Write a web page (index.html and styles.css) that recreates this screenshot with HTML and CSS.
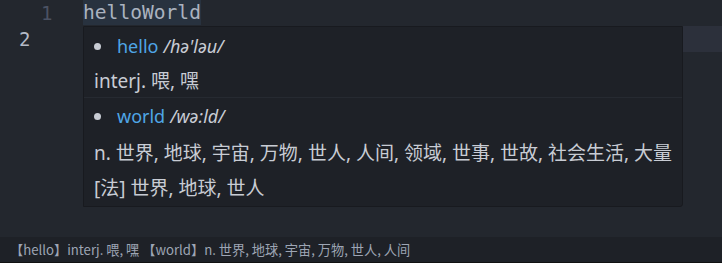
FILE: index.html
```html
<!DOCTYPE html>
<html lang="zh-CN">
<head>
<meta charset="utf-8">
<title>helloWorld</title>
<link rel="stylesheet" href="styles.css">
</head>
<body>
<div class="app">
  <div class="editor">
    <div class="line">
      <div class="gutter"><span class="num num-1">1</span></div>
      <div class="code"><span class="sel">helloWorld</span></div>
    </div>
    <div class="line line-current">
      <div class="gutter"><span class="num num-2">2</span></div>
      <div class="code"></div>
    </div>
    <div class="popup">
      <div class="row head r1"><span class="dot"></span><span class="word">hello</span> <span class="phon">/hə'ləu/</span></div>
      <div class="row def r2">interj. 喂, 嘿</div>
      <div class="row head sep r3"><span class="dot"></span><span class="word">world</span> <span class="phon">/wə:ld/</span></div>
      <div class="row def r4">n. 世界, 地球, 宇宙, 万物, 世人, 人间, 领域, 世事, 世故, 社会生活, 大量</div>
      <div class="row def r5">[法] 世界, 地球, 世人</div>
    </div>
  </div>
  <div class="status">【hello】interj. 喂, 嘿 【world】n. 世界, 地球, 宇宙, 万物, 世人, 人间</div>
</div>
</body>
</html>
```
FILE: styles.css
```css
html, body {
  margin: 0;
  padding: 0;
  background: #23272e;
}
.app {
  width: 722px;
  height: 263px;
  display: flex;
  flex-direction: column;
  overflow: hidden;
}
.editor {
  position: relative;
  flex: 1;
  background: #23272e;
}
.line {
  display: flex;
  height: 26px;
}
.gutter {
  width: 83px;
  flex: none;
  display: flex;
  font-family: "DejaVu Sans Mono", monospace;
  font-size: 19px;
  line-height: 26px;
}
.num-1 {
  margin-left: 41px;
  color: #4b5263;
}
.num-2 {
  margin-left: 19px;
  color: #b4bac6;
}
.code {
  flex: 1;
  font-family: "DejaVu Sans Mono", monospace;
  font-size: 19.6px;
  line-height: 25px;
  color: #abb2bf;
}
.sel {
  display: inline-block;
  background: #28323f;
  height: 25px;
}
.line-current .code {
  background: #2c303b;
}
.popup {
  position: absolute;
  left: 83px;
  top: 26px;
  width: 598px;
  height: 177px;
  background: #1e2127;
  border: 1px solid #181a1f;
  border-radius: 0 0 3px 0;
  font-family: "Noto Sans", "Noto Sans CJK SC", sans-serif;
  color: #c8ccd4;
  padding-top: 2px;
}
.row {
  display: flex;
  align-items: center;
  padding-left: 10px;
  white-space: nowrap;
}
.head {
  font-size: 18px;
}
.def {
  font-size: 19px;
}
.r1 { height: 34px; }
.r2 { height: 34px; }
.r3 { height: 36px; }
.r4 { height: 36px; }
.r5 { height: 34px; }
.row.sep {
  border-top: 1px solid #262a31;
}
.dot {
  width: 7px;
  height: 7px;
  border-radius: 50%;
  background: #c8ccd4;
  margin-right: 16px;
  flex: none;
}
.word {
  color: #4fa6e6;
  margin-right: 5px;
}
.phon {
  font-style: italic;
  color: #c8ccd4;
}
.status {
  height: 25px;
  flex: none;
  background: #1e2127;
  border-bottom: 1px solid #111;
  font-family: "Noto Sans CJK SC", sans-serif;
  font-size: 13.2px;
  line-height: 25px;
  color: #9da5b4;
  padding-left: 10px;
  white-space: nowrap;
}
```
